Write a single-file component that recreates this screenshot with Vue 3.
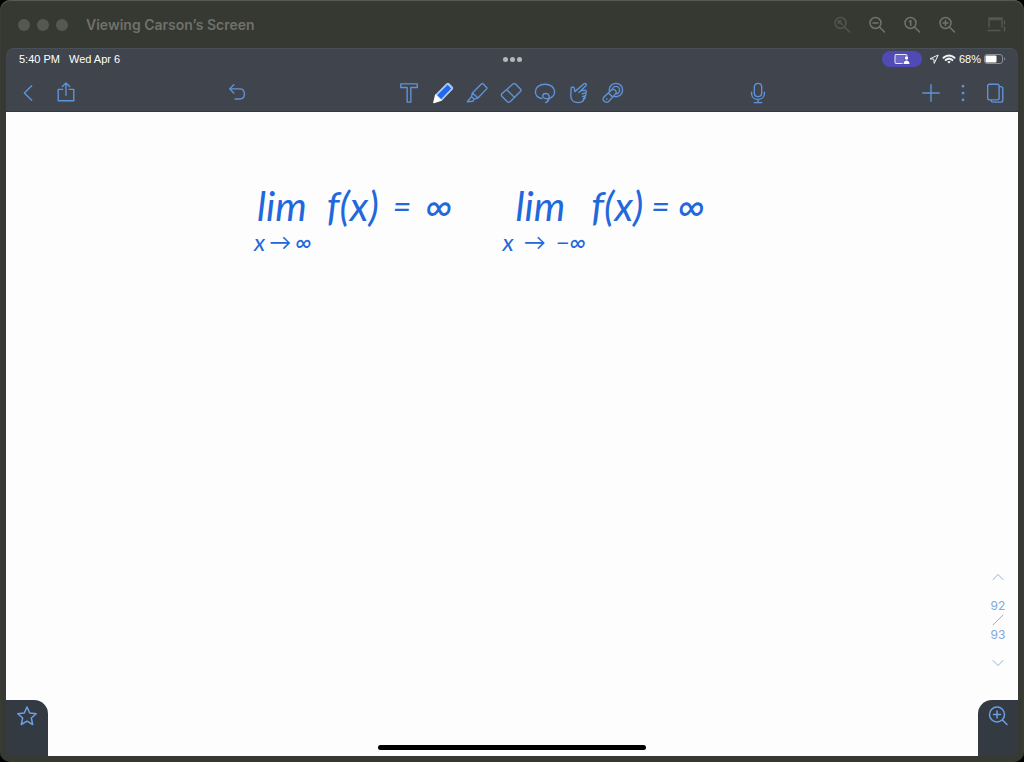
<template>
  <main class="window">
    <header class="titlebar">
      <div class="lights">
        <span v-for="n in 3" :key="n" class="light"></span>
      </div>
      <h1 class="title">Viewing Carson’s Screen</h1>
      <div class="window-tools">
        <button
          v-for="tool in windowTools"
          :key="tool.id"
          type="button"
          class="window-btn"
          :class="[tool.id, { faded: tool.faded }]"
          :aria-label="tool.label"
        >
          <svg viewBox="0 0 20 20" width="20" height="20">
            <path :d="tool.path" />
          </svg>
        </button>
      </div>
    </header>

    <section class="screen">
      <div class="statusbar">
        <div class="clock">
          <span>5:40 PM</span>
          <span>Wed Apr 6</span>
        </div>
        <button type="button" class="multitask" aria-label="Multitasking">
          <span v-for="n in 3" :key="n"></span>
        </button>
        <div class="indicators">
          <span class="sharing">
            <svg viewBox="0 0 16 12" width="16" height="12">
              <rect x="1" y="1.5" width="12" height="9" rx="1" fill="#6d68c8" stroke="#e8e7fb" />
              <path d="M8.5 12v-2l2-2.500v-4h5v8.500z" fill="#4f4ab5" />
              <circle cx="12.5" cy="5" r="1.7" fill="#fff" />
              <path d="M9.500 11c0-2 1.300-3.500 3-3.500s3 1.500 3 3.500z" fill="#fff" />
            </svg>
          </span>
          <svg class="location" viewBox="0 0 10 10" width="10" height="10">
            <path d="M8.800 1.200 1 4.800l3.800.4.400 3.800z" />
          </svg>
          <svg class="wifi" viewBox="0 0 14 10" width="14" height="10">
            <path d="M1.500 3.800c3-3 8-3 11 0M3.700 6.100c1.900-1.700 4.700-1.700 6.600 0" />
            <path d="M5.200 7.700 7 9.600l1.800-1.900c-1-.9-2.600-.9-3.600 0z" class="dot" />
          </svg>
          <span>68%</span>
          <svg class="battery" viewBox="0 0 22 10" width="22" height="10">
            <rect x=".5" y=".5" width="18" height="9" rx="2.5" fill="none" stroke="#8b8f95" />
            <rect x="1.5" y="1.5" width="11" height="7" rx="1" fill="#fff" />
            <path d="M20 3.500c1.500.5 1.500 2.500 0 3z" fill="#8b8f95" />
          </svg>
        </div>
      </div>

      <nav class="toolbar" aria-label="Note tools">
        <div class="group">
          <button v-for="icon in leftIcons" :key="icon.id" type="button" class="tool" :class="icon.id" :aria-label="icon.label">
            <svg viewBox="0 0 24 24" width="22" height="22"><path :d="icon.path" /></svg>
          </button>
        </div>
        <div class="group">
          <button
            v-for="icon in penIcons"
            :key="icon.id"
            type="button"
            class="tool"
            :class="{ active: activeTool === icon.id }"
            :aria-label="icon.label"
            :aria-pressed="activeTool === icon.id"
            @click="activeTool = icon.id"
          >
            <svg viewBox="0 0 24 24" width="22" height="22">
              <path v-if="icon.fill" :d="icon.fill" class="fill" />
              <path :d="icon.path" />
              <path v-if="icon.tip" :d="icon.tip" class="tip" />
              <path v-if="icon.cover" :d="icon.cover" class="cover" />
            </svg>
          </button>
        </div>
        <div class="group">
          <button v-for="icon in rightIcons" :key="icon.id" type="button" class="tool narrow" :class="icon.id" :aria-label="icon.label">
            <svg viewBox="0 0 24 24" width="22" height="22"><path :d="icon.path" /></svg>
          </button>
        </div>
      </nav>

      <article class="page">
        <div class="notes">
          <div class="limit first">
            <div class="row">
              <span class="lim">lim</span>
              <span class="fn">f(x)</span>
              <span class="eq">=</span>
              <span class="inf">∞</span>
            </div>
            <div class="under">
              <span>x</span><span class="arrow">→</span><span>∞</span>
            </div>
          </div>
          <div class="limit second">
            <div class="row">
              <span class="lim">lim</span>
              <span class="fn">f(x)</span>
              <span class="eq">=</span>
              <span class="inf">∞</span>
            </div>
            <div class="under">
              <span>x</span><span class="arrow">→</span><span>−∞</span>
            </div>
          </div>
        </div>

        <div class="pager">
          <button type="button" aria-label="Previous page" @click="page = Math.max(1, page - 1)">
            <svg viewBox="0 0 12 8" width="12" height="8"><path d="M1 6.500l5-5 5 5" /></svg>
          </button>
          <div class="count">
            <span>{{ page }}</span>
            <svg viewBox="0 0 12 12" width="12" height="12"><path d="M1 11 11 1" /></svg>
            <span>{{ pageCount }}</span>
          </div>
          <button type="button" aria-label="Next page" @click="page = Math.min(pageCount, page + 1)">
            <svg viewBox="0 0 12 8" width="12" height="8"><path d="M1 1.500l5 5 5-5" /></svg>
          </button>
        </div>

        <button type="button" class="corner left" aria-label="Favorites">
          <svg viewBox="0 0 24 24" width="24" height="24">
            <path d="M12 3l2.700 6 6.500.700-4.900 4.300 1.400 6.500-5.700-3.300-5.700 3.300 1.400-6.500-4.900-4.300 6.500-.700z" />
          </svg>
        </button>
        <button type="button" class="corner right" aria-label="Zoom">
          <svg viewBox="0 0 24 24" width="24" height="24">
            <path d="M18.500 10.500a7.500 7.500 0 1 1-15 0 7.500 7.500 0 0 1 15 0zM16.500 16l4.500 4.500M11 7v7M7.500 10.500h7" />
          </svg>
        </button>
        <span class="home-bar"></span>
      </article>
    </section>
  </main>
</template>

<script setup>
import { ref } from 'vue';

const activeTool = ref('pen');
const page = ref(92);
const pageCount = 93;

const lens = 'M14 8a5.500 5.500 0 1 1-11 0 5.500 5.500 0 0 1 11 0zM12.500 12l5 5';

const windowTools = [
  { id: 'zoom-fit', label: 'Zoom to fit', faded: true, path: lens + 'M6.500 6l4 4M6.500 8.500v-2.500h2.500' },
  { id: 'zoom-out', label: 'Zoom out', path: lens + 'M6 8h5' },
  { id: 'zoom-actual', label: 'Actual size', path: lens + 'M7.500 6.500l1.200-1v5' },
  { id: 'zoom-in', label: 'Zoom in', path: lens + 'M6 8h5M8.500 5.500v5' },
  { id: 'display', label: 'Display options', faded: true, path: 'M3 12V3h13v9M3 4.500h13M2 15.500h12M18.500 6v3M18.500 12v4' },
];

const leftIcons = [
  { id: 'back', label: 'Back', path: 'M16 4 8 12l8 8' },
  { id: 'share', label: 'Share', path: 'M8.500 8H3.500v12.500h17V8h-5M12 14.500V1M8 5l4-4 4 4' },
  { id: 'undo', label: 'Undo', path: 'M8.500 3 4 7.500l4.500 4.500M4 7.500H15c3.200 0 5 2.200 5 5.500s-1.800 5.500-5 5.500h-5' },
];

const penIcons = [
  { id: 'text', label: 'Text', path: 'M3 2h18v4h-7v16h-4v-16h-7z' },
  {
    id: 'pen',
    label: 'Pen',
    fill: 'M17 2l5 5-12 13-5.500-5.500z',
    path: 'M16.500 2q1-.700 2 .200l3.500 3.500q.700 1 0 2L10 20l-6-5.500z',
    tip: 'M4 14.500l5.500 5.500L2 22.500z',
  },
  {
    id: 'highlighter',
    label: 'Highlighter',
    path: 'M18.500 2l4 4q.700.700 0 1.500L13 17.500 7 12 17 2q.700-.700 1.500 0zM7 12l-1 4 3 2.700 4-1.200M6 16l-4.500 5.500 6 -.500 1.500-2.300',
  },
  {
    id: 'eraser',
    label: 'Eraser',
    path: 'M14.500 2q1-1 2 0l6 6q1 1 0 2L11 21.500q-1.500 1.300-3 0l-6-6q-1-1.300 0-2.700zM7.500 8.500l8 8',
  },
  {
    id: 'lasso',
    label: 'Lasso',
    path: 'M8.500 18C4.500 17 1.500 14 1.500 10.500 1.500 6 6 2.500 12 2.500s10.500 3.500 10.500 8c0 3.200-2.500 6.200-6 7.300M16.500 18c-3.300.8-7-.2-7-2.600 0-1.800 1.500-2.900 3.400-2.900 2.300 0 3.900 1.500 3.600 4.500-.2 2.700-1.200 4.500-3.700 5.500',
  },
  {
    id: 'hand',
    label: 'Hand',
    path: 'M14 9.500 19.500 4.200q1-1.300.2-2.200t-2.200-.2L7.500 10.500 6.800 6.500Q5.500 4.500 3.500 6.200L3 15c0 4.500 3.300 7.500 8 7.500s7.500-2.500 7-6.500M12 11.500 14 9.500l5-.5q1.700.8.700 2.500L15.500 13M18.500 12q1.800 1 .8 2.500L16 16M18 15.500q1.300.8.500 2L16.500 18.500',
  },
  {
    id: 'tape',
    label: 'Tape',
    path: 'M22.500 8.800a7.300 7.300 0 1 1-14.600 0 7.300 7.300 0 0 1 14.600 0zM19.200 8.800a4 4 0 1 1-8 0 4 4 0 0 1 8 0z',
    cover: 'M10.800 8.500q2-1.200 3.700.5t.5 3.700L7 21.500q-2.200 1.500-4.500-.5t-.5-4.500zM7.500 12.500l4.500 4M5 18.500h.5',
  },
];

const rightIcons = [
  {
    id: 'mic',
    label: 'Record',
    path: 'M12 1.500c2.500 0 4 1.700 4 4v6.500c0 2.300-1.500 4-4 4s-4-1.700-4-4v-6.500c0-2.300 1.500-4 4-4zM5 11v1.500c0 4 3 6.500 7 6.500s7-2.500 7-6.500v-1.500M12 19v3.500M8 22.500h8',
  },
  { id: 'add', label: 'Add', path: 'M12 3v18M3 12h18' },
  { id: 'more', label: 'More', path: 'M12 4.500h.01M12 12h.01M12 19.500h.01' },
  { id: 'pages', label: 'Pages', path: 'M6 2.500h8.500q2 0 2 2v13q0 2-2 2H6q-2 0-2-2v-13q0-2 2-2zM17 5h1.500q2 0 2 2v13q0 2-2 2H10q-2 0-2.500-2' },
];
</script>

<style scoped>
.window {
  box-sizing: border-box;
  min-height: 100vh;
  display: flex;
  flex-direction: column;
  padding: 0 6px 6px;
  border-radius: 10px;
  background: #363832;
  box-shadow: inset 0 1px 1px #5a5c56;
  font-family: Inter, "Liberation Sans", sans-serif;
}

button {
  display: flex;
  align-items: center;
  justify-content: center;
  margin: 0;
  padding: 0;
  border: none;
  background: none;
  font: inherit;
  color: inherit;
  cursor: pointer;
}

svg {
  flex: none;
  fill: none;
  stroke-linecap: round;
  stroke-linejoin: round;
}

.titlebar {
  display: flex;
  align-items: center;
  height: 49px;
  padding: 0 12px;
  color: #6f716c;
}

.lights {
  display: flex;
  gap: 7px;
}

.light {
  width: 12px;
  height: 12px;
  border-radius: 50%;
  background: #565752;
}

.title {
  margin: 0 0 0 18px;
  font-size: 14px;
  line-height: 20px;
  font-weight: 600;
}

.window-tools {
  display: flex;
  gap: 15px;
  margin-left: auto;
}

.window-btn svg {
  stroke: #71736e;
  stroke-width: 1.5;
}

.window-btn.faded svg {
  stroke: #53554f;
}

.window-btn.display {
  margin-left: 14px;
}

.screen {
  flex: 1;
  display: flex;
  flex-direction: column;
  overflow: hidden;
  border-radius: 8px 8px 0 0;
  background: #40454d;
  box-shadow: 0 -1px 0 #4a5058;
}

.statusbar {
  display: grid;
  grid-template-columns: 1fr auto 1fr;
  align-items: center;
  height: 20px;
  padding: 0 12px 0 13px;
  font-family: "Liberation Sans", Arial, sans-serif;
  font-size: 11px;
  line-height: 16px;
  color: #fff;
}

.clock {
  display: flex;
  gap: 9px;
}

.multitask {
  gap: 2px;
}

.multitask span {
  width: 5px;
  height: 5px;
  border-radius: 50%;
  background: #b4b6b9;
}

.indicators {
  display: flex;
  align-items: center;
  justify-content: flex-end;
  gap: 3px;
}

.sharing {
  display: flex;
  align-items: center;
  justify-content: center;
  width: 40px;
  height: 16px;
  margin-right: 4px;
  border-radius: 8px;
  background: #4f4ab5;
}

.location,
.wifi {
  stroke: #f2f3f4;
}

.wifi {
  stroke-width: 2;
}

.wifi .dot {
  fill: #f2f3f4;
  stroke: none;
}

.toolbar {
  display: grid;
  grid-template-columns: 1fr auto 1fr;
  height: 36px;
  padding: 6px 7px 0 5px;
  border-bottom: 1px solid #343941;
}

.group {
  display: flex;
  align-items: center;
}

.tool {
  width: 34px;
  height: 34px;
}

.tool.narrow {
  width: 32px;
}

.tool svg {
  stroke: #5f93d8;
  stroke-width: 1.5;
}

.tool.share {
  margin-left: 4px;
}

.tool.undo {
  margin-left: auto;
  margin-right: 138px;
}

.tool.mic {
  margin-left: 112px;
  margin-right: auto;
}

.tool.more svg {
  stroke-width: 3;
}

.tool.active .fill {
  fill: #2467e8;
}

.tool.active svg {
  stroke: #a9c8f5;
}

.tool.active .tip {
  fill: #fff;
  stroke: #fff;
}

.tool .cover {
  fill: #40454d;
}

.page {
  position: relative;
  flex: 1;
  background: #fdfdfd;
}

.notes {
  display: flex;
  gap: 50px;
  padding: 68px 60px 0 248px;
  font-family: Lato, "DejaVu Sans", sans-serif;
  font-style: italic;
  color: #2268dc;
}

.row {
  display: flex;
  gap: 14px;
  font-size: 40px;
  line-height: 52px;
}

.fn {
  margin-left: 6px;
}

.eq {
  font-size: 32px;
}

.under {
  display: flex;
  align-items: center;
  gap: 4px;
  font-size: 24px;
  line-height: 20px;
}

.arrow {
  font-size: 22px;
}

.first .row {
  margin-left: 3px;
}

.second .row {
  gap: 8px;
  margin-left: 13px;
}

.second .fn {
  margin-left: 18px;
}

.second .under {
  gap: 10px;
}

.pager {
  position: absolute;
  right: 8px;
  bottom: 89px;
  display: flex;
  flex-direction: column;
  align-items: center;
  gap: 16px;
  width: 24px;
  font-size: 12px;
  line-height: 17px;
  color: #7fa9dd;
}

.pager svg {
  stroke: #8bb0de;
}

.count {
  display: flex;
  flex-direction: column;
  align-items: center;
}

.corner {
  position: absolute;
  bottom: 0;
  align-items: flex-start;
  width: 42px;
  height: 56px;
  padding-top: 4px;
  background: #343a42;
}

.corner svg {
  stroke: #6b9fe6;
  stroke-width: 1.5;
}

.corner.left {
  left: 0;
  border-radius: 0 14px 0 0;
}

.corner.right {
  right: 0;
  width: 40px;
  border-radius: 14px 0 0 0;
}

.home-bar {
  position: absolute;
  bottom: 6px;
  left: 50%;
  width: 268px;
  height: 5px;
  border-radius: 3px;
  background: #000;
  transform: translateX(-50%);
}
</style>

<style>
body {
  margin: 0;
  background: #000;
}
</style>
